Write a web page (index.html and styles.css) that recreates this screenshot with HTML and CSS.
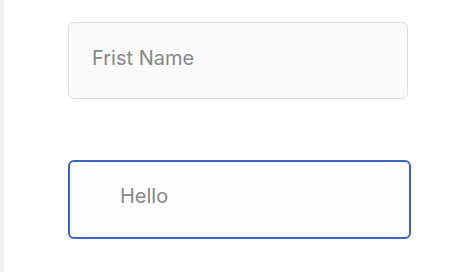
FILE: index.html
```html
<!DOCTYPE html>
<html>
<head>
<meta charset="utf-8">
<link rel="stylesheet" href="styles.css">
</head>
<body>
<div class="page">
  <div class="rail"></div>
  <div class="form">
    <div class="field field-idle"><span class="placeholder">Frist Name</span></div>
    <div class="field field-focus"><span class="value">Hello</span></div>
  </div>
</div>
</body>
</html>
```
FILE: styles.css
```css
html, body {
  margin: 0;
  padding: 0;
  background: #ffffff;
}
.page {
  display: flex;
  width: 474px;
  height: 272px;
  overflow: hidden;
  font-family: Inter, "Noto Sans", sans-serif;
}
.rail {
  width: 4px;
  flex: none;
  background: #eef3f2;
}
.form {
  display: flex;
  flex-direction: column;
  gap: 61px;
  padding: 22px 0 0 64px;
}
.field {
  box-sizing: border-box;
  display: flex;
  align-items: center;
  border-radius: 6px;
  font-size: 20px;
  line-height: 24px;
  color: #878787;
}
.field-idle {
  width: 340px;
  height: 77px;
  border: 1px solid #dedede;
  background: #fafafa;
  padding: 0 0 5px 23px;
}
.field-focus {
  width: 343px;
  height: 79px;
  border: 2px solid #3f62c9;
  background: #fdfdfd;
  padding: 0 0 8px 50px;
}
```
